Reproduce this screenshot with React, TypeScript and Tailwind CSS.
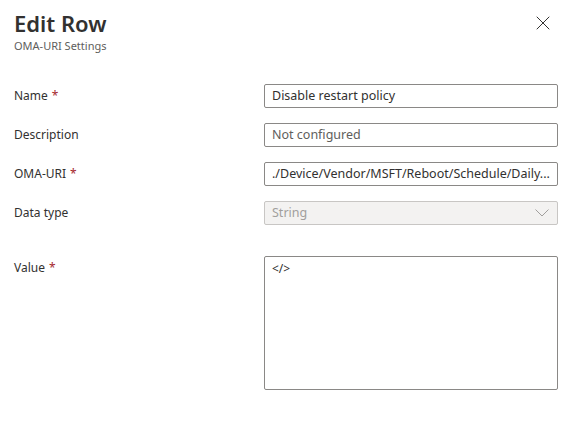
import { X } from "lucide-react";

const font = { fontFamily: '"Noto Sans", "Open Sans", Arial, sans-serif' };

const Required = () => <span className="ml-1 text-[#a4262c]">*</span>;

const App = () => {
  return (
    <div className="min-h-screen w-[569px] bg-white text-[#323130]" style={font}>
      <div className="relative pl-[14px] pr-[11px] pt-[7px]">
        <h1 className="text-[22px] font-semibold leading-[32px]">Edit Row</h1>
        <p className="text-[11px] leading-[14px] text-[#605e5c]">OMA-URI Settings</p>
        <button className="absolute right-[14px] top-[11px] text-[#323130]">
          <X className="h-[24px] w-[24px]" strokeWidth={1} />
        </button>

        <div className="mt-[31px] flex flex-col text-[12.5px]">
          <div className="flex items-center">
            <div className="w-[250px] text-[12px]">
              Name
              <Required />
            </div>
            <div className="flex h-[24px] flex-1 items-center rounded-[2px] border border-[#8a8886] px-[7px]">
              Disable restart policy
            </div>
          </div>

          <div className="mt-[15px] flex items-center">
            <div className="w-[250px] text-[12px]">Description</div>
            <div className="flex h-[24px] flex-1 items-center rounded-[2px] border border-[#8a8886] px-[7px] text-[#605e5c]">
              Not configured
            </div>
          </div>

          <div className="mt-[15px] flex items-center">
            <div className="w-[250px] text-[12px]">
              OMA-URI
              <Required />
            </div>
            <div className="flex h-[24px] flex-1 items-center overflow-hidden whitespace-nowrap rounded-[2px] border border-[#8a8886] px-[7px]">
              ./Device/Vendor/MSFT/Reboot/Schedule/Daily...
            </div>
          </div>

          <div className="mt-[15px] flex items-center">
            <div className="w-[250px] text-[12px]">Data type</div>
            <div className="flex h-[24px] flex-1 items-center justify-between rounded-[2px] border border-[#c8c6c4] bg-[#f3f2f1] pl-[7px] pr-[8px] text-[#a19f9d]">
              <span>String</span>
              <svg width="14" height="8" viewBox="0 0 14 8" fill="none" stroke="#a19f9d" strokeWidth="1">
                <polyline points="0.5,0.5 7,7 13.5,0.5" />
              </svg>
            </div>
          </div>

          <div className="mt-[31px] flex items-start">
            <div className="w-[250px] pt-[3px] text-[12px]">
              Value
              <Required />
            </div>
            <div className="h-[134px] flex-1 rounded-[2px] border border-[#8a8886] px-[7px] pt-[3px] text-[12px]">
              &lt;/&gt;
            </div>
          </div>
        </div>
      </div>
    </div>
  );
};

export default App;
